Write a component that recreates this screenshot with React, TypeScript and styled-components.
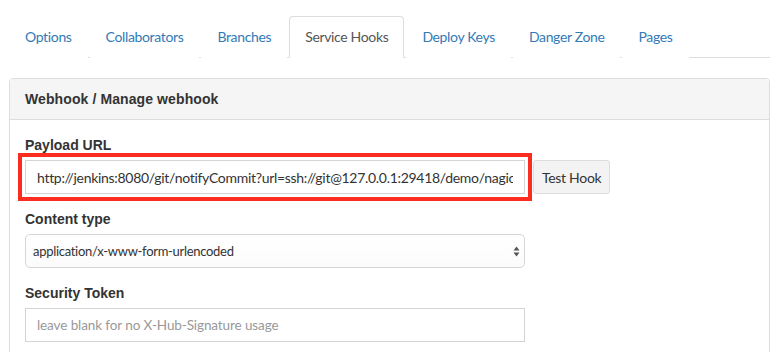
import styled, { createGlobalStyle } from "styled-components";

const tabs = [
  "Options",
  "Collaborators",
  "Branches",
  "Service Hooks",
  "Deploy Keys",
  "Danger Zone",
  "Pages",
];

const GlobalStyle = createGlobalStyle`
  html, body {
    margin: 0;
    padding: 0;
    background: #fff;
  }
  body {
    font-family: Lato, "Noto Sans", sans-serif;
    color: #333;
  }
`;

const App = () => {
  return (
    <Root>
      <GlobalStyle />
      <TabBar>
        {tabs.map((tab) => (
          <Tab key={tab} $active={tab === "Service Hooks"}>
            {tab}
          </Tab>
        ))}
      </TabBar>
      <Panel>
        <PanelHeading>Webhook / Manage webhook</PanelHeading>
        <PanelBody>
          <FormGroup>
            <Label>Payload URL</Label>
            <InputRow>
              <HighlightedInput
                readOnly
                value="http://jenkins:8080/git/notifyCommit?url=ssh://git@127.0.0.1:29418/demo/nagios.git"
              />
              <TestButton>Test Hook</TestButton>
            </InputRow>
          </FormGroup>
          <FormGroup>
            <Label>Content type</Label>
            <FakeSelect>
              <span>application/x-www-form-urlencoded</span>
              <svg width="7" height="11" viewBox="0 0 7 11">
                <path d="M3.5 0.5 L6.5 4.5 L0.5 4.5 Z" fill="#555" />
                <path d="M3.5 10.5 L6.5 6.5 L0.5 6.5 Z" fill="#555" />
              </svg>
            </FakeSelect>
          </FormGroup>
          <FormGroup>
            <Label>Security Token</Label>
            <TextInput placeholder="leave blank for no X-Hub-Signature usage" />
          </FormGroup>
        </PanelBody>
      </Panel>
    </Root>
  );
};

const Root = styled.div`
  width: 761px;
  padding: 16px 0 0 9px;
`;

const TabBar = styled.ul`
  display: flex;
  list-style: none;
  margin: 0;
  padding: 0;
  border-bottom: 1px solid #ddd;
`;

const Tab = styled.li<{ $active?: boolean }>`
  margin: 0 2px -1px 0;
  padding: 10px 15px;
  line-height: 20px;
  font-size: 14px;
  letter-spacing: -0.35px;
  color: ${(p) => (p.$active ? "#555" : "#337ab7")};
  background: #fff;
  border: 1px solid ${(p) => (p.$active ? "#ddd" : "transparent")};
  border-bottom-color: ${(p) => (p.$active ? "#fff" : "transparent")};
  border-radius: 4px 4px 0 0;
  cursor: pointer;
`;

const Panel = styled.div`
  margin-top: 20px;
  border: 1px solid #ddd;
  border-radius: 4px;
  background: #fff;
`;

const PanelHeading = styled.div`
  padding: 10px 15px;
  line-height: 20px;
  background: #f5f5f5;
  border-bottom: 1px solid #ddd;
  border-radius: 3px 3px 0 0;
  font-family: "Liberation Sans", Arial, sans-serif;
  font-weight: bold;
  font-size: 14px;
  letter-spacing: 0.1px;
  color: #333;
`;

const PanelBody = styled.div`
  padding: 15px;
`;

const FormGroup = styled.div`
  margin-bottom: 15px;
`;

const Label = styled.label`
  display: block;
  margin-bottom: 5px;
  line-height: 20px;
  font-family: "Liberation Sans", Arial, sans-serif;
  font-weight: bold;
  font-size: 14px;
  color: #333;
`;

const InputRow = styled.div`
  display: flex;
  align-items: flex-start;
`;

const TextInput = styled.input`
  box-sizing: border-box;
  display: block;
  width: 500px;
  height: 34px;
  padding: 6px 11px;
  border: 1px solid #d4d4d4;
  border-radius: 0;
  font-family: Lato, "Noto Sans", sans-serif;
  font-size: 13.5px;
  letter-spacing: -0.1px;
  color: #333;
  background: #fff;
  outline: none;
  &::placeholder {
    color: #999;
  }
`;

const HighlightedInput = styled(TextInput)`
  font-size: 14px;
  letter-spacing: -0.3px;
  outline: 4px solid #fb2c20;
  outline-offset: 3px;
`;

const TestButton = styled.button`
  box-sizing: border-box;
  height: 34px;
  margin-left: 8px;
  padding: 6px 8px;
  border: 1px solid #ddd;
  border-radius: 3px;
  background: #f3f3f3;
  font-family: Lato, "Noto Sans", sans-serif;
  font-size: 14px;
  letter-spacing: -0.3px;
  color: #333;
`;

const FakeSelect = styled.div`
  box-sizing: border-box;
  display: flex;
  align-items: center;
  justify-content: space-between;
  width: 500px;
  height: 34px;
  padding: 0 4px 0 7px;
  border: 1px solid #d6d6d6;
  border-radius: 5px;
  background: linear-gradient(#fff, #fbfbfb);
  font-size: 13px;
  letter-spacing: -0.3px;
  color: #333;
`;

export default App;
